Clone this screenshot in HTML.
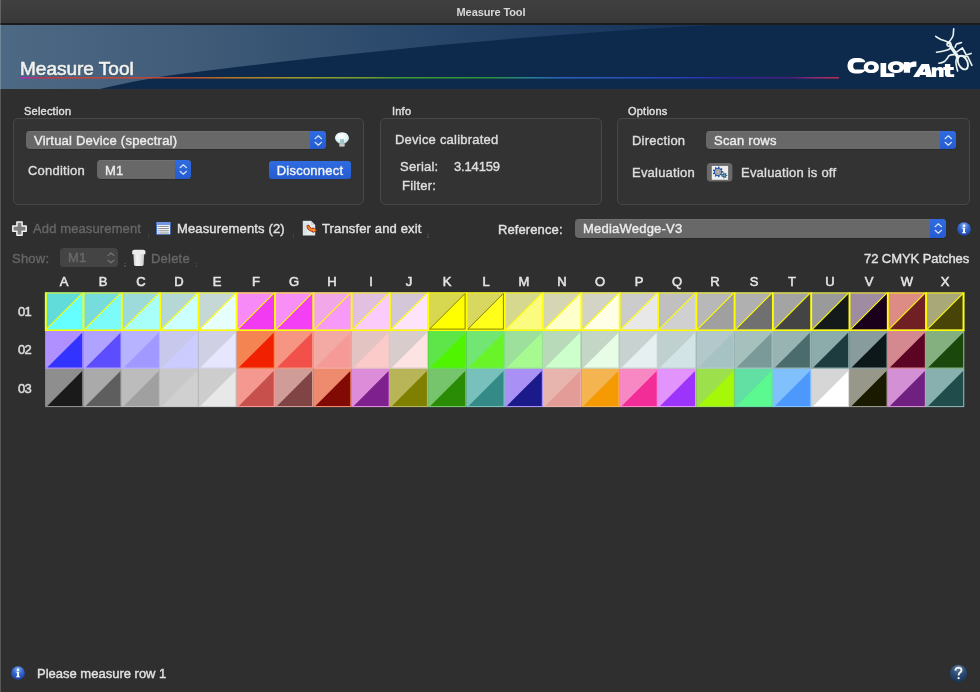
<!DOCTYPE html>
<html><head><meta charset="utf-8"><title>Measure Tool</title>
<style>
html,body{margin:0;padding:0;}
body{width:980px;height:692px;overflow:hidden;background:#2f2f2f;position:relative;font-family:"Liberation Sans",sans-serif;}
.t{position:absolute;white-space:nowrap;font-size:13px;line-height:16px;color:#dedede;letter-spacing:0.22px;-webkit-text-stroke:0.38px currentColor;}
.w{color:#e2e2e2;}
.g{color:#666666;}
.abs{position:absolute;}
.t,.tx{will-change:transform;}
.grp{position:absolute;border:1px solid #484848;border-radius:5px;background:#333333;box-sizing:border-box;}
.lbl{font-size:11px;color:#e0e0e0;}
.dd{position:absolute;background:#686868;border-radius:4px;box-sizing:border-box;overflow:hidden;box-shadow:0 0.5px 0 rgba(0,0,0,.35), inset 0 0.5px 0 rgba(255,255,255,.12);}
.dd .cap{position:absolute;right:0;top:0;bottom:0;width:16px;background:linear-gradient(#2f6ce0,#255bd0);}
.dd .tx{position:absolute;left:8px;top:1px;font-size:13px;line-height:17px;color:#ececec;white-space:nowrap;letter-spacing:0.22px;-webkit-text-stroke:0.38px currentColor;}
.col{text-align:center;font-size:13px;letter-spacing:0;-webkit-text-stroke:0.55px currentColor;color:#e4e4e4;}
.rl{font-size:13px;letter-spacing:-0.7px;-webkit-text-stroke:0.5px currentColor;color:#dedede;}
</style></head><body>
<!-- title bar -->
<div class="abs" style="left:0;top:0;width:980px;height:23px;background:linear-gradient(#404040,#383838)"></div>
<div class="t" style="left:0.9px;width:980px;text-align:center;top:4px;font-size:11px;letter-spacing:-0.1px;font-weight:bold;-webkit-text-stroke:0;color:#d8d8d8">Measure Tool</div>
<!-- banner -->
<svg class="abs" style="left:0;top:24px" width="980" height="65" viewBox="0 24 980 65">
<defs>
<linearGradient id="bl" x1="0" y1="0" x2="1" y2="0"><stop offset="0" stop-color="#4d6984"/><stop offset="0.27" stop-color="#3f5b78"/><stop offset="0.54" stop-color="#2b496b"/><stop offset="0.81" stop-color="#1c3a60"/><stop offset="1" stop-color="#133258"/></linearGradient>
<linearGradient id="rb" x1="0" y1="0" x2="1" y2="0">
<stop offset="0.000" stop-color="#b428c8"/><stop offset="0.027" stop-color="#c83048"/><stop offset="0.061" stop-color="#cc4032"/><stop offset="0.201" stop-color="#cc4a30"/><stop offset="0.256" stop-color="#c47c22"/><stop offset="0.337" stop-color="#aaa428"/><stop offset="0.422" stop-color="#80aa28"/><stop offset="0.464" stop-color="#44a42e"/><stop offset="0.574" stop-color="#309a3a"/><stop offset="0.621" stop-color="#288a98"/><stop offset="0.659" stop-color="#2f68c4"/><stop offset="0.801" stop-color="#2a44c4"/><stop offset="0.864" stop-color="#3424a4"/><stop offset="0.941" stop-color="#501c84"/><stop offset="0.971" stop-color="#a02878"/><stop offset="1.000" stop-color="#c83050"/></linearGradient>
</defs>
<rect x="0" y="24" width="980" height="65" fill="#0d2a4c"/>
<path d="M0 24H738C640 28 540 36 440 45C340 55 240 66 180 74C150 78 125 83 100 89H0Z" fill="url(#bl)"/>
<rect x="20" y="77.1" width="819" height="1.4" fill="url(#rb)"/>
</svg>
<div class="abs" style="left:0;top:23px;width:980px;height:1.5px;background:#1b1b1b"></div>
<div class="t" style="left:20px;top:56.5px;font-size:19px;line-height:24px;color:#f2f2f2;letter-spacing:0px;-webkit-text-stroke:0.6px #f0f0ea;text-shadow:0 1px 1px rgba(0,0,0,.35)">Measure Tool</div>
<!-- logo -->
<svg class="abs" style="left:830px;top:24px" width="150" height="65" viewBox="830 24 150 65">
<g fill="#fff">
<path fill-rule="evenodd" d="M855.00 58.10H859.00A7.5 6.8 0 0 1 866.50 64.90V66.60A7.5 6.8 0 0 1 859.00 73.40H855.00A7.5 6.8 0 0 1 847.50 66.60V64.90A7.5 6.8 0 0 1 855.00 58.10ZM856.60 62.20H864.60A3.4 3.4 0 0 1 868.00 65.60V66.20A3.4 3.4 0 0 1 864.60 69.60H856.60A3.4 3.4 0 0 1 853.20 66.20V65.60A3.4 3.4 0 0 1 856.60 62.20Z"/>
<rect x="861.2" y="63.9" width="6" height="4.0" fill="#0d2a4e"/>
<rect x="865.2" y="57" width="3" height="18" fill="#0d2a4e"/>
<path fill-rule="evenodd" d="M870.30 61.30H872.30A6.6 5.6 0 0 1 878.90 66.90V67.50A6.6 5.6 0 0 1 872.30 73.10H870.30A6.6 5.6 0 0 1 863.70 67.50V66.90A6.6 5.6 0 0 1 870.30 61.30ZM870.90 64.70H871.30A2.9 2.5 0 0 1 874.20 67.20V67.30A2.9 2.5 0 0 1 871.30 69.80H870.90A2.9 2.5 0 0 1 868.00 67.30V67.20A2.9 2.5 0 0 1 870.90 64.70Z"/>
<path d="M880.5 62.9H886.2V73.3H894.3V77.1H880.5Z"/>
<path fill-rule="evenodd" d="M895.00 61.20H897.20A7.2 5.7 0 0 1 904.40 66.90V67.30A7.2 5.7 0 0 1 897.20 73.00H895.00A7.2 5.7 0 0 1 887.80 67.30V66.90A7.2 5.7 0 0 1 895.00 61.20ZM896.00 64.70H896.40A3.1 2.6 0 0 1 899.50 67.30V67.40A3.1 2.6 0 0 1 896.40 70.00H896.00A3.1 2.6 0 0 1 892.90 67.40V67.30A3.1 2.6 0 0 1 896.00 64.70Z"/>
<path d="M903.8 61.9H909.6V63.3C911 61.9 913.4 61.3 916.4 61.6V66.8C913.2 66.3 910.6 66.9 910.1 69V72.8H903.8Z"/>
<path fill-rule="evenodd" d="M913.1 77.1L921.6 63.9H929.0L932.3 77.1H926.2L925.8 74.9H920.2L919.2 77.1ZM922.7 71.7H925.2L924.6 68.6Z"/>
<path d="M931.8 67.2H936.2V68.3C937.4 67.2 939 66.8 940.4 66.9C942.6 67 943.6 68.4 943.6 70.4V77.1H939.1V71.4C939.1 70.5 938.6 70.2 937.8 70.2C936.7 70.2 936.2 70.8 936.2 71.8V77.1H931.8Z"/>
<path d="M944.9 63.9H950.3V67.1H953.8V69.9H950.3V73.2C950.3 74.1 950.9 74.3 951.8 74.3H954.2V77.1H948.6C946.2 77.1 944.9 76.2 944.9 74V69.9H943.2V67.1H944.9Z"/>
</g>
<g fill="none" stroke="#eaf3f0" stroke-width="1.6" stroke-linecap="round" stroke-linejoin="round">
<path d="M948.8 42.3Q952.6 37.5 953.2 35.1L953.7 28.8"/>
<path d="M948 41.9Q943.5 40.5 940.9 39.5Q938 38 935.7 36.3"/>
<path d="M951.2 47.8Q948.5 49.8 946.5 50.2Q941 51.8 936.5 52.2"/>
<path d="M954.4 54.6Q950.5 54.6 948.8 55.8Q947 59 944.9 61.2Q942 62.8 938.9 63.3"/>
<path d="M956.8 57.4Q955.6 61 956 63.7Q956.6 68 957.6 70.9"/>
<path d="M955.2 47.1Q955.6 44.8 956.8 43.9Q959 43.6 961.5 42.5"/>
<path d="M956.8 51.8L962.4 47.8L966.3 55L971.1 53.4"/>
<path d="M959.2 55.8Q964 55.6 967.9 56.8L971.9 65.3"/>
<path d="M949.8 45L957.6 56.6" stroke-width="3.4"/>
<ellipse cx="962.9" cy="62.6" rx="4.5" ry="7.2" transform="rotate(-26 962.9 62.6)" stroke-width="1.9"/>
</g>
<circle cx="949" cy="44.3" r="2.7" fill="#eaf3f0"/>
<circle cx="948.6" cy="44.8" r="0.8" fill="#3a5878"/>
</svg>
<div class="abs" style="left:0;top:0;width:1.2px;height:692px;background:rgba(255,255,255,.2)"></div>
<!-- group labels -->
<div class="t lbl" style="left:24px;top:103px">Selection</div>
<div class="t lbl" style="left:392px;top:103px">Info</div>
<div class="t lbl" style="left:628px;top:103px">Options</div>
<div class="grp" style="left:13px;top:118px;width:351px;height:87px"></div>
<div class="grp" style="left:380px;top:118px;width:222px;height:87px"></div>
<div class="grp" style="left:617px;top:118px;width:353px;height:87px"></div>

<!-- selection -->
<div class="dd" style="left:26px;top:131px;width:300px;height:18px"><div class="tx">Virtual Device (spectral)</div><div class="cap"><svg width="16" height="19" viewBox="0 0 16 19" style="position:absolute;left:0;top:50%;margin-top:-9.5px"><path d="M5.1 7.7L8.3 4.8L11.5 7.7M5.1 11.3L8.3 14.2L11.5 11.3" fill="none" stroke="#d2dff8" stroke-width="1.25" stroke-linecap="round" stroke-linejoin="round"/></svg></div></div>
<div class="t" style="left:28px;top:162.6px">Condition</div>
<div class="dd" style="left:97px;top:160px;width:94px;height:19px"><div class="tx" style="top:1.5px">M1</div><div class="cap"><svg width="16" height="19" viewBox="0 0 16 19" style="position:absolute;left:0;top:50%;margin-top:-9.5px"><path d="M5.1 7.7L8.3 4.8L11.5 7.7M5.1 11.3L8.3 14.2L11.5 11.3" fill="none" stroke="#d2dff8" stroke-width="1.25" stroke-linecap="round" stroke-linejoin="round"/></svg></div></div>
<div class="abs" style="left:269px;top:161px;width:82px;height:18px;border-radius:3px;background:linear-gradient(#2f6ce0,#255bd0)"></div>
<div class="t" style="left:269px;top:162.5px;width:82px;text-align:center;color:#f4f4f4">Disconnect</div>

<svg class="abs" style="left:332px;top:129px" width="20" height="20" viewBox="332 129 20 20">
<defs><radialGradient id="bg1" cx="0.45" cy="0.35" r="0.7"><stop offset="0" stop-color="#ffffff"/><stop offset="0.6" stop-color="#e4f4f4"/><stop offset="1" stop-color="#b8d4d8"/></radialGradient></defs>
<path d="M342 132.2C346.2 132.2 349 135 349 138C349 140.6 346.6 142.2 345 143.6H339C337.4 142.2 335 140.6 335 138C335 135 337.8 132.2 342 132.2Z" fill="url(#bg1)"/>
<rect x="340" y="139.2" width="4" height="4" fill="#9cc6cc"/>
<rect x="339.4" y="143.4" width="5.2" height="3.2" rx="0.6" fill="#e6e6e6"/>
<rect x="339.4" y="144.6" width="5.2" height="0.8" fill="#9a9a9a"/>
</svg>
<!-- info -->
<div class="t" style="left:395px;top:132px">Device calibrated</div>
<div class="t" style="left:400px;top:159px">Serial:</div>
<div class="t" style="left:454px;top:159px;letter-spacing:-0.15px">3.14159</div>
<div class="t" style="left:402px;top:178px">Filter:</div>

<!-- options -->
<div class="t" style="left:632px;top:133px">Direction</div>
<div class="dd" style="left:706px;top:131px;width:249.8px;height:18px"><div class="tx">Scan rows</div><div class="cap"><svg width="16" height="19" viewBox="0 0 16 19" style="position:absolute;left:0;top:50%;margin-top:-9.5px"><path d="M5.1 7.7L8.3 4.8L11.5 7.7M5.1 11.3L8.3 14.2L11.5 11.3" fill="none" stroke="#d2dff8" stroke-width="1.25" stroke-linecap="round" stroke-linejoin="round"/></svg></div></div>
<div class="t" style="left:632px;top:165px">Evaluation</div>
<svg class="abs" style="left:704px;top:160px" width="32" height="26" viewBox="704 160 32 26">
<rect x="706.9" y="163" width="25.5" height="18.6" rx="3.6" fill="#696969"/>
<rect x="711.8" y="165.9" width="16.3" height="13.9" fill="#ededed"/>
<path d="M727.27 174.97L727.27 175.83L726.21 176.00L725.96 176.52L726.49 177.45L725.82 177.99L725.02 177.27L724.46 177.39L724.06 178.39L723.22 178.20L723.29 177.13L722.84 176.77L721.81 177.08L721.44 176.30L722.32 175.69L722.32 175.11L721.44 174.50L721.81 173.72L722.84 174.03L723.29 173.67L723.22 172.60L724.06 172.41L724.46 173.41L725.02 173.53L725.82 172.81L726.49 173.35L725.96 174.28L726.21 174.80Z" fill="#2a6a90"/>
<path d="M723.27 171.31L723.27 172.49L721.79 172.82L721.49 173.63L722.41 174.83L721.65 175.74L720.31 175.04L719.56 175.47L719.50 176.98L718.33 177.19L717.76 175.79L716.90 175.64L715.88 176.76L714.85 176.17L715.31 174.72L714.75 174.06L713.25 174.26L712.85 173.15L714.12 172.33L714.12 171.47L712.85 170.65L713.25 169.54L714.75 169.74L715.31 169.08L714.85 167.63L715.88 167.04L716.90 168.16L717.76 168.01L718.33 166.61L719.50 166.82L719.56 168.33L720.31 168.76L721.65 168.06L722.41 168.97L721.49 170.17L721.79 170.98Z" fill="#1c4ea4"/>
<circle cx="718" cy="171.9" r="3.1" fill="#a4a4a4"/>
<circle cx="718" cy="171.9" r="1.0" fill="#bdbdbd"/>
<circle cx="724.3" cy="175.4" r="0.9" fill="#9aa"/>
</svg>
<div class="t" style="left:741px;top:165px">Evaluation is off</div>

<!-- toolbar -->
<div class="t g" style="left:33px;top:221.4px;letter-spacing:0.12px">Add measurement</div>
<div class="t w" style="left:177.3px;top:221.4px;letter-spacing:0.14px">Measurements (2)</div>
<div class="t w" style="left:322.3px;top:221.4px;letter-spacing:0.14px">Transfer and exit</div>
<div class="t w" style="left:497.5px;top:221.5px;letter-spacing:0.1px">Reference:</div>
<div class="dd" style="left:575px;top:218.8px;width:370.8px;height:18.8px"><div class="tx" style="top:1.4px;left:7.5px">MediaWedge-V3</div><div class="cap"><svg width="16" height="19" viewBox="0 0 16 19" style="position:absolute;left:0;top:50%;margin-top:-9.5px"><path d="M5.1 7.7L8.3 4.8L11.5 7.7M5.1 11.3L8.3 14.2L11.5 11.3" fill="none" stroke="#d2dff8" stroke-width="1.25" stroke-linecap="round" stroke-linejoin="round"/></svg></div></div>

<div class="t g" style="left:12px;top:250.6px">Show:</div>
<div class="dd" style="left:60px;top:248.3px;width:58px;height:18.5px;background:#444;box-shadow:none"><div class="tx" style="color:#6a6a6a">M1</div></div>
<div class="t g" style="left:150.5px;top:250.6px">Delete</div>
<div class="t w" style="right:10.5px;top:250.5px;letter-spacing:-0.07px">72 CMYK Patches</div>

<!-- icons -->
<svg class="abs" style="left:8px;top:216px" width="24" height="24" viewBox="8 216 24 24">
<path d="M16.9 221.9H22.1V226H26.2V231.2H22.1V235.3H16.9V231.2H12.8V226H16.9Z" fill="#7e7e7e" stroke="#f2f2f2" stroke-width="1.5" stroke-linejoin="round"/>
</svg>
<svg class="abs" style="left:154px;top:219px" width="20" height="18" viewBox="154 219 20 18">
<defs><linearGradient id="th" x1="0" y1="0" x2="0" y2="1"><stop offset="0" stop-color="#8ab0f4"/><stop offset="1" stop-color="#4c7ee0"/></linearGradient></defs>
<rect x="156.1" y="222" width="14.7" height="12.8" rx="0.8" fill="#4a74cc"/>
<rect x="156.7" y="222.4" width="13.5" height="2.4" fill="url(#th)"/>
<rect x="157" y="224.8" width="12.9" height="9.3" fill="#f6f8fb"/>
<path d="M159.2 226.4H168.8M159.2 228.6H168.8M159.2 230.8H168.8M159.2 233H168.8" stroke="#7a7a7a" stroke-width="0.9"/>
<path d="M157.6 226.4H158.7M157.6 228.6H158.7M157.6 230.8H158.7M157.6 233H158.7" stroke="#3c68d8" stroke-width="1"/>
</svg>
<svg class="abs" style="left:300px;top:218px" width="20" height="20" viewBox="300 218 20 20">
<path d="M303 221H311L315 225V235.3H303Z" fill="#e6efef" stroke="#b8c8cc" stroke-width="0.5"/>
<path d="M311 221V225H315Z" fill="#c4d4d8"/>
<path d="M304.6 223V233.5M306.2 223V233.5M307.8 223V226" stroke="#c8d2d4" stroke-width="0.6"/>
<path d="M308.2 226.6C309 228.6 310.6 230 313 230.2" fill="none" stroke="#b8241a" stroke-width="3.4" stroke-linecap="round"/>
<path d="M312.6 227L317.2 230.3L312.6 233.2Z" fill="#b8241a"/>
<path d="M308.2 226.6C309 228.6 310.6 230 313 230.2" fill="none" stroke="#f08a1c" stroke-width="1.7" stroke-linecap="round"/>
<path d="M313.2 228.4L316 230.3L313.2 232Z" fill="#f6b020"/>
</svg>
<svg class="abs" style="left:129px;top:247px" width="20" height="22" viewBox="129 247 20 22">
<defs><linearGradient id="tr" x1="0" y1="0" x2="1" y2="0"><stop offset="0" stop-color="#cfcfcf"/><stop offset="0.35" stop-color="#f4f4f4"/><stop offset="0.7" stop-color="#e2e2e2"/><stop offset="1" stop-color="#c4c4c4"/></linearGradient></defs>
<path d="M133.4 253.5H144.2L143.6 264.6Q143.5 265.9 142.2 265.9H135.4Q134.1 265.9 134 264.6Z" fill="url(#tr)"/>
<path d="M132.2 251.6Q132.2 249.8 134.5 249.7H143.1Q145.4 249.8 145.4 251.6V254.2H132.2Z" fill="#ececec"/>
</svg>
<div class="abs" style="left:110.5px;top:252.6px;width:0;height:0"><svg style="position:absolute;left:-6px;top:-1px" width="12" height="12" viewBox="0 0 12 12"><path d="M3 3.6L6 1L9 3.6M3 8.2L6 10.8L9 8.2" fill="none" stroke="#747474" stroke-width="1.2" stroke-linecap="round" stroke-linejoin="round"/></svg></div>
<div class="abs" style="left:147.6px;top:233.6px;width:1.6px;height:4.4px;background:repeating-linear-gradient(rgba(255,255,255,.12) 0 1px,rgba(255,255,255,0) 1px 1.7px)"></div>
<div class="abs" style="left:292.8px;top:233.6px;width:1.6px;height:4.4px;background:repeating-linear-gradient(rgba(255,255,255,.12) 0 1px,rgba(255,255,255,0) 1px 1.7px)"></div>
<div class="abs" style="left:427px;top:233.6px;width:1.6px;height:4.4px;background:repeating-linear-gradient(rgba(255,255,255,.12) 0 1px,rgba(255,255,255,0) 1px 1.7px)"></div>
<div class="abs" style="left:124.2px;top:263px;width:1.6px;height:4.4px;background:repeating-linear-gradient(rgba(255,255,255,.12) 0 1px,rgba(255,255,255,0) 1px 1.7px)"></div>
<div class="abs" style="left:195.6px;top:263px;width:1.6px;height:4.4px;background:repeating-linear-gradient(rgba(255,255,255,.12) 0 1px,rgba(255,255,255,0) 1px 1.7px)"></div>
<svg class="abs" style="left:955.3px;top:219.6px" width="18" height="18" viewBox="955.3 219.6 18 18">
<defs><radialGradient id="iga" cx="0.5" cy="0.25" r="0.8"><stop offset="0" stop-color="#86b0f0"/><stop offset="0.45" stop-color="#3468d0"/><stop offset="1" stop-color="#1a3c9c"/></radialGradient></defs>
<circle cx="964.3" cy="228.6" r="6.8" fill="url(#iga)"/>
<circle cx="964.3" cy="225.29999999999998" r="1.25" fill="#fff"/>
<path d="M962.6999999999999 227.4H965.3V231.79999999999998H966.1999999999999V232.9H962.4V231.79999999999998H963.4V228.4H962.6999999999999Z" fill="#fff"/>
</svg><svg class="abs" style="left:8.8px;top:664px" width="18" height="18" viewBox="8.8 664 18 18">
<defs><radialGradient id="igb" cx="0.5" cy="0.25" r="0.8"><stop offset="0" stop-color="#86b0f0"/><stop offset="0.45" stop-color="#3468d0"/><stop offset="1" stop-color="#1a3c9c"/></radialGradient></defs>
<circle cx="17.8" cy="673" r="6.8" fill="url(#igb)"/>
<circle cx="17.8" cy="669.7" r="1.25" fill="#fff"/>
<path d="M16.2 671.8H18.8V676.2H19.7V677.3H15.9V676.2H16.900000000000002V672.8H16.2Z" fill="#fff"/>
</svg><svg class="abs" style="left:948px;top:663px" width="22" height="22" viewBox="948 663 22 22">
<defs><radialGradient id="hg" cx="0.5" cy="0.2" r="0.85"><stop offset="0" stop-color="#5c7ea0"/><stop offset="0.5" stop-color="#2c4c74"/><stop offset="1" stop-color="#15305a"/></radialGradient></defs>
<circle cx="958.4" cy="673.3" r="8.6" fill="url(#hg)"/>
<path d="M955.4 670.6Q955.5 667.6 958.5 667.6Q961.5 667.7 961.5 670.2Q961.5 671.6 960 672.6Q958.6 673.6 958.6 675.4" fill="none" stroke="#f4f4f4" stroke-width="1.9"/>
<circle cx="958.6" cy="678.2" r="1.15" fill="#f4f4f4"/>
</svg>
<div class="t w col" style="left:49.2px;top:274.1px;width:30px">A</div><div class="t w col" style="left:87.5px;top:274.1px;width:30px">B</div><div class="t w col" style="left:125.8px;top:274.1px;width:30px">C</div><div class="t w col" style="left:164.1px;top:274.1px;width:30px">D</div><div class="t w col" style="left:202.4px;top:274.1px;width:30px">E</div><div class="t w col" style="left:240.7px;top:274.1px;width:30px">F</div><div class="t w col" style="left:279.1px;top:274.1px;width:30px">G</div><div class="t w col" style="left:317.4px;top:274.1px;width:30px">H</div><div class="t w col" style="left:355.6px;top:274.1px;width:30px">I</div><div class="t w col" style="left:393.9px;top:274.1px;width:30px">J</div><div class="t w col" style="left:432.2px;top:274.1px;width:30px">K</div><div class="t w col" style="left:470.6px;top:274.1px;width:30px">L</div><div class="t w col" style="left:508.8px;top:274.1px;width:30px">M</div><div class="t w col" style="left:547.1px;top:274.1px;width:30px">N</div><div class="t w col" style="left:585.4px;top:274.1px;width:30px">O</div><div class="t w col" style="left:623.8px;top:274.1px;width:30px">P</div><div class="t w col" style="left:662.0px;top:274.1px;width:30px">Q</div><div class="t w col" style="left:700.4px;top:274.1px;width:30px">R</div><div class="t w col" style="left:738.6px;top:274.1px;width:30px">S</div><div class="t w col" style="left:776.9px;top:274.1px;width:30px">T</div><div class="t w col" style="left:815.2px;top:274.1px;width:30px">U</div><div class="t w col" style="left:853.5px;top:274.1px;width:30px">V</div><div class="t w col" style="left:891.8px;top:274.1px;width:30px">W</div><div class="t w col" style="left:930.1px;top:274.1px;width:30px">X</div>
<div class="t w rl" style="left:17.8px;top:303.9px">01</div><div class="t w rl" style="left:17.8px;top:342.2px">02</div><div class="t w rl" style="left:17.8px;top:380.6px">03</div>
<svg id="grid" width="980" height="130" viewBox="0 285 980 130" style="position:absolute;left:0;top:285px" shape-rendering="auto">
<rect x="45.10" y="292.20" width="38.60" height="38.60" fill="#62dbdb"/>
<path d="M46.10 329.50L82.90 292.70L82.90 329.50Z" fill="#66ffff"/>
<rect x="83.40" y="292.20" width="38.60" height="38.60" fill="#76dcdc"/>
<path d="M84.40 329.50L121.20 292.70L121.20 329.50Z" fill="#7cfbfb"/>
<rect x="121.70" y="292.20" width="38.60" height="38.60" fill="#9ddada"/>
<path d="M122.70 329.50L159.50 292.70L159.50 329.50Z" fill="#a8fffa"/>
<rect x="160.00" y="292.20" width="38.60" height="38.60" fill="#b5d8d6"/>
<path d="M161.00 329.50L197.80 292.70L197.80 329.50Z" fill="#ccffff"/>
<rect x="198.30" y="292.20" width="38.60" height="38.60" fill="#c5d8d6"/>
<path d="M199.30 329.50L236.10 292.70L236.10 329.50Z" fill="#e6fffc"/>
<rect x="236.60" y="292.20" width="38.60" height="38.60" fill="#f88af8"/>
<path d="M237.60 329.50L274.40 292.70L274.40 329.50Z" fill="#f23af2"/>
<rect x="274.90" y="292.20" width="38.60" height="38.60" fill="#f78ff7"/>
<path d="M275.90 329.50L312.70 292.70L312.70 329.50Z" fill="#f33ff5"/>
<rect x="313.20" y="292.20" width="38.60" height="38.60" fill="#f2a8e8"/>
<path d="M314.20 329.50L351.00 292.70L351.00 329.50Z" fill="#f799f7"/>
<rect x="351.50" y="292.20" width="38.60" height="38.60" fill="#e2c0e0"/>
<path d="M352.50 329.50L389.30 292.70L389.30 329.50Z" fill="#facbfb"/>
<rect x="389.80" y="292.20" width="38.60" height="38.60" fill="#d4c8d8"/>
<path d="M390.80 329.50L427.60 292.70L427.60 329.50Z" fill="#fde4fb"/>
<rect x="428.10" y="292.20" width="38.60" height="38.60" fill="#d8d850"/>
<path d="M429.10 329.50L465.90 292.70L465.90 329.50Z" fill="#ffff00"/>
<rect x="466.40" y="292.20" width="38.60" height="38.60" fill="#d8d860"/>
<path d="M467.40 329.50L504.20 292.70L504.20 329.50Z" fill="#ffff1a"/>
<rect x="504.70" y="292.20" width="38.60" height="38.60" fill="#d6d890"/>
<path d="M505.70 329.50L542.50 292.70L542.50 329.50Z" fill="#fbfb80"/>
<rect x="543.00" y="292.20" width="38.60" height="38.60" fill="#d6d6b4"/>
<path d="M544.00 329.50L580.80 292.70L580.80 329.50Z" fill="#ffffcc"/>
<rect x="581.30" y="292.20" width="38.60" height="38.60" fill="#d4d4c6"/>
<path d="M582.30 329.50L619.10 292.70L619.10 329.50Z" fill="#ffffe8"/>
<rect x="619.60" y="292.20" width="38.60" height="38.60" fill="#cccccc"/>
<path d="M620.60 329.50L657.40 292.70L657.40 329.50Z" fill="#e8e8e8"/>
<rect x="657.90" y="292.20" width="38.60" height="38.60" fill="#c0c0c0"/>
<path d="M658.90 329.50L695.70 292.70L695.70 329.50Z" fill="#d0d0d0"/>
<rect x="696.20" y="292.20" width="38.60" height="38.60" fill="#b8b8b8"/>
<path d="M697.20 329.50L734.00 292.70L734.00 329.50Z" fill="#a0a0a0"/>
<rect x="734.50" y="292.20" width="38.60" height="38.60" fill="#b0b0b0"/>
<path d="M735.50 329.50L772.30 292.70L772.30 329.50Z" fill="#707070"/>
<rect x="772.80" y="292.20" width="38.60" height="38.60" fill="#a4a4a4"/>
<path d="M773.80 329.50L810.60 292.70L810.60 329.50Z" fill="#444444"/>
<rect x="811.10" y="292.20" width="38.60" height="38.60" fill="#9a9a9a"/>
<path d="M812.10 329.50L848.90 292.70L848.90 329.50Z" fill="#141a1a"/>
<rect x="849.40" y="292.20" width="38.60" height="38.60" fill="#a08ca0"/>
<path d="M850.40 329.50L887.20 292.70L887.20 329.50Z" fill="#1a001a"/>
<rect x="887.70" y="292.20" width="38.60" height="38.60" fill="#dc8c84"/>
<path d="M888.70 329.50L925.50 292.70L925.50 329.50Z" fill="#702024"/>
<rect x="926.00" y="292.20" width="38.30" height="38.60" fill="#a8a878"/>
<path d="M927.00 329.50L963.80 292.70L963.80 329.50Z" fill="#484408"/>
<rect x="45.10" y="330.50" width="38.60" height="38.60" fill="#b090ff"/>
<path d="M47.30 367.60L82.20 332.70L82.20 367.60Z" fill="#3333ff"/>
<rect x="83.40" y="330.50" width="38.60" height="38.60" fill="#b0a3ff"/>
<path d="M85.60 367.60L120.50 332.70L120.50 367.60Z" fill="#5c4dff"/>
<rect x="121.70" y="330.50" width="38.60" height="38.60" fill="#b8b3ff"/>
<path d="M123.90 367.60L158.80 332.70L158.80 367.60Z" fill="#a199ff"/>
<rect x="160.00" y="330.50" width="38.60" height="38.60" fill="#c8c8ec"/>
<path d="M162.20 367.60L197.10 332.70L197.10 367.60Z" fill="#ccccff"/>
<rect x="198.30" y="330.50" width="38.60" height="38.60" fill="#d0d0e4"/>
<path d="M200.50 367.60L235.40 332.70L235.40 367.60Z" fill="#e6e6ff"/>
<rect x="236.60" y="330.50" width="38.60" height="38.60" fill="#f48552"/>
<path d="M238.80 367.60L273.70 332.70L273.70 367.60Z" fill="#f02000"/>
<rect x="274.90" y="330.50" width="38.60" height="38.60" fill="#f69582"/>
<path d="M277.10 367.60L312.00 332.70L312.00 367.60Z" fill="#f2504a"/>
<rect x="313.20" y="330.50" width="38.60" height="38.60" fill="#f4aaa4"/>
<path d="M315.40 367.60L350.30 332.70L350.30 367.60Z" fill="#f59a96"/>
<rect x="351.50" y="330.50" width="38.60" height="38.60" fill="#e4c4c2"/>
<path d="M353.70 367.60L388.60 332.70L388.60 367.60Z" fill="#fbcbc9"/>
<rect x="389.80" y="330.50" width="38.60" height="38.60" fill="#d8cccc"/>
<path d="M392.00 367.60L426.90 332.70L426.90 367.60Z" fill="#fde4e2"/>
<rect x="428.10" y="330.50" width="38.60" height="38.60" fill="#5ee648"/>
<path d="M430.30 367.60L465.20 332.70L465.20 367.60Z" fill="#50f400"/>
<rect x="466.40" y="330.50" width="38.60" height="38.60" fill="#72e672"/>
<path d="M468.60 367.60L503.50 332.70L503.50 367.60Z" fill="#68f428"/>
<rect x="504.70" y="330.50" width="38.60" height="38.60" fill="#9ce09c"/>
<path d="M506.90 367.60L541.80 332.70L541.80 367.60Z" fill="#a6fa90"/>
<rect x="543.00" y="330.50" width="38.60" height="38.60" fill="#b8dab8"/>
<path d="M545.20 367.60L580.10 332.70L580.10 367.60Z" fill="#ccffcc"/>
<rect x="581.30" y="330.50" width="38.60" height="38.60" fill="#c4d6c6"/>
<path d="M583.50 367.60L618.40 332.70L618.40 367.60Z" fill="#e8fde6"/>
<rect x="619.60" y="330.50" width="38.60" height="38.60" fill="#c8d2d0"/>
<path d="M621.80 367.60L656.70 332.70L656.70 367.60Z" fill="#e6f0f0"/>
<rect x="657.90" y="330.50" width="38.60" height="38.60" fill="#bfd0ce"/>
<path d="M660.10 367.60L695.00 332.70L695.00 367.60Z" fill="#d2e4e6"/>
<rect x="696.20" y="330.50" width="38.60" height="38.60" fill="#b2c8ca"/>
<path d="M698.40 367.60L733.30 332.70L733.30 367.60Z" fill="#a6c2c2"/>
<rect x="734.50" y="330.50" width="38.60" height="38.60" fill="#a6c0be"/>
<path d="M736.70 367.60L771.60 332.70L771.60 367.60Z" fill="#7a9a9a"/>
<rect x="772.80" y="330.50" width="38.60" height="38.60" fill="#98b4b2"/>
<path d="M775.00 367.60L809.90 332.70L809.90 367.60Z" fill="#4a6c6c"/>
<rect x="811.10" y="330.50" width="38.60" height="38.60" fill="#8cacac"/>
<path d="M813.30 367.60L848.20 332.70L848.20 367.60Z" fill="#1c3c40"/>
<rect x="849.40" y="330.50" width="38.60" height="38.60" fill="#889c9e"/>
<path d="M851.60 367.60L886.50 332.70L886.50 367.60Z" fill="#0c181a"/>
<rect x="887.70" y="330.50" width="38.60" height="38.60" fill="#d48890"/>
<path d="M889.90 367.60L924.80 332.70L924.80 367.60Z" fill="#5c0424"/>
<rect x="926.00" y="330.50" width="38.30" height="38.60" fill="#84b080"/>
<path d="M928.20 367.60L963.10 332.70L963.10 367.60Z" fill="#1a480c"/>
<rect x="45.10" y="368.80" width="38.60" height="38.30" fill="#8e8e8e"/>
<path d="M47.30 405.90L82.20 371.00L82.20 405.90Z" fill="#1a1a1a"/>
<rect x="83.40" y="368.80" width="38.60" height="38.30" fill="#aaaaaa"/>
<path d="M85.60 405.90L120.50 371.00L120.50 405.90Z" fill="#5e5e5e"/>
<rect x="121.70" y="368.80" width="38.60" height="38.30" fill="#bcbcbc"/>
<path d="M123.90 405.90L158.80 371.00L158.80 405.90Z" fill="#a0a0a0"/>
<rect x="160.00" y="368.80" width="38.60" height="38.30" fill="#c8c8c8"/>
<path d="M162.20 405.90L197.10 371.00L197.10 405.90Z" fill="#d0d0d0"/>
<rect x="198.30" y="368.80" width="38.60" height="38.30" fill="#cdcdcd"/>
<path d="M200.50 405.90L235.40 371.00L235.40 405.90Z" fill="#e8e8e8"/>
<rect x="236.60" y="368.80" width="38.60" height="38.30" fill="#f49890"/>
<path d="M238.80 405.90L273.70 371.00L273.70 405.90Z" fill="#c8504c"/>
<rect x="274.90" y="368.80" width="38.60" height="38.30" fill="#d09c98"/>
<path d="M277.10 405.90L312.00 371.00L312.00 405.90Z" fill="#804444"/>
<rect x="313.20" y="368.80" width="38.60" height="38.30" fill="#ee8a6e"/>
<path d="M315.40 405.90L350.30 371.00L350.30 405.90Z" fill="#820a04"/>
<rect x="351.50" y="368.80" width="38.60" height="38.30" fill="#dc8cd8"/>
<path d="M353.70 405.90L388.60 371.00L388.60 405.90Z" fill="#7e208e"/>
<rect x="389.80" y="368.80" width="38.60" height="38.30" fill="#b8b458"/>
<path d="M392.00 405.90L426.90 371.00L426.90 405.90Z" fill="#808000"/>
<rect x="428.10" y="368.80" width="38.60" height="38.30" fill="#76c46c"/>
<path d="M430.30 405.90L465.20 371.00L465.20 405.90Z" fill="#2a8c04"/>
<rect x="466.40" y="368.80" width="38.60" height="38.30" fill="#78c0bc"/>
<path d="M468.60 405.90L503.50 371.00L503.50 405.90Z" fill="#348a86"/>
<rect x="504.70" y="368.80" width="38.60" height="38.30" fill="#a890f4"/>
<path d="M506.90 405.90L541.80 371.00L541.80 405.90Z" fill="#1a1a8a"/>
<rect x="543.00" y="368.80" width="38.60" height="38.30" fill="#e8b4ae"/>
<path d="M545.20 405.90L580.10 371.00L580.10 405.90Z" fill="#e49c98"/>
<rect x="581.30" y="368.80" width="38.60" height="38.30" fill="#f4b450"/>
<path d="M583.50 405.90L618.40 371.00L618.40 405.90Z" fill="#f69a04"/>
<rect x="619.60" y="368.80" width="38.60" height="38.30" fill="#f788c4"/>
<path d="M621.80 405.90L656.70 371.00L656.70 405.90Z" fill="#f32d98"/>
<rect x="657.90" y="368.80" width="38.60" height="38.30" fill="#e294fc"/>
<path d="M660.10 405.90L695.00 371.00L695.00 405.90Z" fill="#9c34fc"/>
<rect x="696.20" y="368.80" width="38.60" height="38.30" fill="#9ce04c"/>
<path d="M698.40 405.90L733.30 371.00L733.30 405.90Z" fill="#a4f808"/>
<rect x="734.50" y="368.80" width="38.60" height="38.30" fill="#62e0a4"/>
<path d="M736.70 405.90L771.60 371.00L771.60 405.90Z" fill="#5cf890"/>
<rect x="772.80" y="368.80" width="38.60" height="38.30" fill="#80c0fc"/>
<path d="M775.00 405.90L809.90 371.00L809.90 405.90Z" fill="#4c98fc"/>
<rect x="811.10" y="368.80" width="38.60" height="38.30" fill="#d6d6d6"/>
<path d="M813.30 405.90L848.20 371.00L848.20 405.90Z" fill="#ffffff"/>
<rect x="849.40" y="368.80" width="38.60" height="38.30" fill="#98988a"/>
<path d="M851.60 405.90L886.50 371.00L886.50 405.90Z" fill="#1a1a00"/>
<rect x="887.70" y="368.80" width="38.60" height="38.30" fill="#d490d4"/>
<path d="M889.90 405.90L924.80 371.00L924.80 405.90Z" fill="#702080"/>
<rect x="926.00" y="368.80" width="38.30" height="38.30" fill="#88b0ae"/>
<path d="M928.20 405.90L963.10 371.00L963.10 405.90Z" fill="#204c4c"/>
<path d="M46.30 329.30L82.40 293.20" stroke="#ffff00" stroke-width="1.05" fill="none"/>
<path d="M84.60 329.30L120.70 293.20" stroke="#ffff00" stroke-width="1.05" fill="none"/>
<path d="M122.90 329.30L159.00 293.20" stroke="#ffff00" stroke-width="1.05" fill="none"/>
<path d="M161.20 329.30L197.30 293.20" stroke="#ffff00" stroke-width="1.05" fill="none"/>
<path d="M199.50 329.30L235.60 293.20" stroke="#ffff00" stroke-width="1.05" fill="none"/>
<path d="M237.80 329.30L273.90 293.20" stroke="#ffff00" stroke-width="1.05" fill="none"/>
<path d="M276.10 329.30L312.20 293.20" stroke="#ffff00" stroke-width="1.05" fill="none"/>
<path d="M314.40 329.30L350.50 293.20" stroke="#ffff00" stroke-width="1.05" fill="none"/>
<path d="M352.70 329.30L388.80 293.20" stroke="#ffff00" stroke-width="1.05" fill="none"/>
<path d="M391.00 329.30L427.10 293.20" stroke="#ffff00" stroke-width="1.05" fill="none"/>
<path d="M429.30 329.30L465.40 293.20" stroke="#7d7600" stroke-width="0.9" fill="none"/>
<path d="M467.60 329.30L503.70 293.20" stroke="#7d7600" stroke-width="0.9" fill="none"/>
<path d="M505.90 329.30L542.00 293.20" stroke="#ffff00" stroke-width="1.05" fill="none"/>
<path d="M544.20 329.30L580.30 293.20" stroke="#ffff00" stroke-width="1.05" fill="none"/>
<path d="M582.50 329.30L618.60 293.20" stroke="#ffff00" stroke-width="1.05" fill="none"/>
<path d="M620.80 329.30L656.90 293.20" stroke="#ffff00" stroke-width="1.05" fill="none"/>
<path d="M659.10 329.30L695.20 293.20" stroke="#ffff00" stroke-width="1.05" fill="none"/>
<path d="M697.40 329.30L733.50 293.20" stroke="#ffff00" stroke-width="1.05" fill="none"/>
<path d="M735.70 329.30L771.80 293.20" stroke="#ffff00" stroke-width="1.05" fill="none"/>
<path d="M774.00 329.30L810.10 293.20" stroke="#ffff00" stroke-width="1.05" fill="none"/>
<path d="M812.30 329.30L848.40 293.20" stroke="#ffff00" stroke-width="1.05" fill="none"/>
<path d="M850.60 329.30L886.70 293.20" stroke="#ffff00" stroke-width="1.05" fill="none"/>
<path d="M888.90 329.30L925.00 293.20" stroke="#ffff00" stroke-width="1.05" fill="none"/>
<path d="M927.20 329.30L963.30 293.20" stroke="#ffff00" stroke-width="1.05" fill="none"/>
<path d="M45.80 292.40V331.10" stroke="#ffff00" stroke-width="1.9" fill="none"/>
<path d="M83.50 292.40V331.10" stroke="#ffff00" stroke-width="1.9" fill="none"/>
<path d="M121.80 292.40V331.10" stroke="#ffff00" stroke-width="1.9" fill="none"/>
<path d="M160.10 292.40V331.10" stroke="#ffff00" stroke-width="1.9" fill="none"/>
<path d="M198.40 292.40V331.10" stroke="#ffff00" stroke-width="1.9" fill="none"/>
<path d="M236.70 292.40V331.10" stroke="#ffff00" stroke-width="1.9" fill="none"/>
<path d="M275.00 292.40V331.10" stroke="#ffff00" stroke-width="1.9" fill="none"/>
<path d="M313.30 292.40V331.10" stroke="#ffff00" stroke-width="1.9" fill="none"/>
<path d="M351.60 292.40V331.10" stroke="#ffff00" stroke-width="1.9" fill="none"/>
<path d="M389.90 292.40V331.10" stroke="#ffff00" stroke-width="1.9" fill="none"/>
<path d="M428.20 292.40V331.10" stroke="#ffff00" stroke-width="1.9" fill="none"/>
<path d="M466.50 292.40V331.10" stroke="#ffff00" stroke-width="1.9" fill="none"/>
<path d="M504.80 292.40V331.10" stroke="#ffff00" stroke-width="1.9" fill="none"/>
<path d="M543.10 292.40V331.10" stroke="#ffff00" stroke-width="1.9" fill="none"/>
<path d="M581.40 292.40V331.10" stroke="#ffff00" stroke-width="1.9" fill="none"/>
<path d="M619.70 292.40V331.10" stroke="#ffff00" stroke-width="1.9" fill="none"/>
<path d="M658.00 292.40V331.10" stroke="#ffff00" stroke-width="1.9" fill="none"/>
<path d="M696.30 292.40V331.10" stroke="#ffff00" stroke-width="1.9" fill="none"/>
<path d="M734.60 292.40V331.10" stroke="#ffff00" stroke-width="1.9" fill="none"/>
<path d="M772.90 292.40V331.10" stroke="#ffff00" stroke-width="1.9" fill="none"/>
<path d="M811.20 292.40V331.10" stroke="#ffff00" stroke-width="1.9" fill="none"/>
<path d="M849.50 292.40V331.10" stroke="#ffff00" stroke-width="1.9" fill="none"/>
<path d="M887.80 292.40V331.10" stroke="#ffff00" stroke-width="1.9" fill="none"/>
<path d="M926.10 292.40V331.10" stroke="#ffff00" stroke-width="1.9" fill="none"/>
<path d="M963.50 292.40V331.10" stroke="#ffff00" stroke-width="1.9" fill="none"/>
<path d="M45.10 292.95H964.30" stroke="#f4f400" stroke-opacity="0.85" stroke-width="1.1" fill="none"/>
<path d="M45.10 330.25H964.30" stroke="#ffff00" stroke-width="1.4" fill="none"/>
<path d="M465.10 293.70V329.10H429.60" stroke="#7d7600" stroke-width="0.9" fill="none"/>
<path d="M503.40 293.70V329.10H467.90" stroke="#7d7600" stroke-width="0.9" fill="none"/>
</svg>

<div class="t w" style="left:37px;top:666px;letter-spacing:0">Please measure row 1</div>
</body></html>
